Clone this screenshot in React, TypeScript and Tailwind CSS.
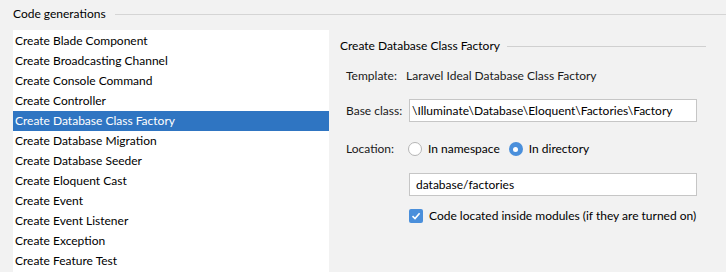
import { FC } from "react";

const ITEMS = [
  "Create Blade Component",
  "Create Broadcasting Channel",
  "Create Console Command",
  "Create Controller",
  "Create Database Class Factory",
  "Create Database Migration",
  "Create Database Seeder",
  "Create Eloquent Cast",
  "Create Event",
  "Create Event Listener",
  "Create Exception",
  "Create Feature Test",
];

const SELECTED = 4;

const Radio: FC<{ checked?: boolean }> = ({ checked }) =>
  checked ? (
    <span className="w-[14px] h-[14px] rounded-full bg-[#4a8fdb] flex items-center justify-center">
      <span className="w-[5px] h-[5px] rounded-full bg-white" />
    </span>
  ) : (
    <span className="w-[14px] h-[14px] rounded-full bg-white border border-[#b5b5b5]" />
  );

const Checkbox: FC = () => (
  <span className="w-[14px] h-[14px] rounded-[2px] bg-[#4a8fdb] flex items-center justify-center">
    <svg width="10" height="10" viewBox="0 0 10 10" fill="none">
      <path d="M1.5 5.2 L4 7.6 L8.6 2.2" stroke="white" strokeWidth="1.6" />
    </svg>
  </span>
);

export default function App() {
  return (
    <div
      className="w-[726px] h-[272px] bg-[#f2f2f2] overflow-hidden text-[12px] text-black whitespace-nowrap"
      style={{ fontFamily: 'Lato, "Noto Sans", sans-serif' }}
    >
      <div className="flex items-center h-[28px] pl-[13px] pr-0">
        <span className="leading-[16px]">Code generations</span>
        <div className="flex-1 h-px bg-[#d5d5d5] ml-[9px]" />
      </div>

      <div className="flex mt-[2px]">
        <div className="ml-[13px] w-[316px] h-[242px] bg-white pt-[1px]">
          {ITEMS.map((item, i) => (
            <div
              key={item}
              className={`h-[20px] leading-[20px] pl-[2px] ${
                i === SELECTED ? "bg-[#2f75c2] text-white" : ""
              }`}
            >
              {item}
            </div>
          ))}
        </div>

        <div className="flex-1 ml-[11px] mr-[20px]">
          <div className="flex items-center h-[20px] mt-[6px]">
            <span>Create Database Class Factory</span>
            <div className="flex-1 h-px bg-[#d0d0d0] ml-[7px]" />
          </div>

          <div className="flex items-center h-[20px] mt-[10px] pl-[6px] text-[#1a1a1a]">
            <span className="w-[60px] shrink-0">Template:</span>
            <span>Laravel Ideal Database Class Factory</span>
          </div>

          <div className="flex items-center mt-[13px] pl-[6px]">
            <span className="w-[63px] shrink-0 text-[#1a1a1a]">Base class:</span>
            <div className="w-[288px] h-[23px] shrink-0 bg-white border border-[#c6c6c6] flex items-center pl-[2px]">
              \Illuminate\Database\Eloquent\Factories\Factory
            </div>
          </div>

          <div className="flex items-center h-[20px] mt-[17px] pl-[6px]">
            <span className="w-[62px] shrink-0 text-[#1a1a1a]">Location:</span>
            <Radio />
            <span className="ml-[6px]">In namespace</span>
            <span className="ml-[9px]">
              <Radio checked />
            </span>
            <span className="ml-[6px]">In directory</span>
          </div>

          <div className="flex items-center mt-[14px] pl-[69px]">
            <div className="w-[288px] h-[23px] shrink-0 bg-white border border-[#c6c6c6] flex items-center pl-[6px]">
              database/factories
            </div>
          </div>

          <div className="flex items-center h-[20px] mt-[10px] pl-[69px]">
            <Checkbox />
            <span className="ml-[6px]">Code located inside modules (if they are turned on)</span>
          </div>
        </div>
      </div>
    </div>
  );
}
